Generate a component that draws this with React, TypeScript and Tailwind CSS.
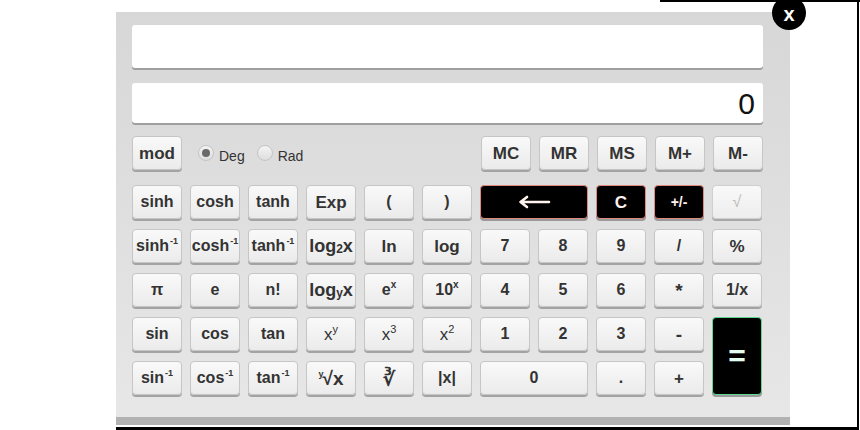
import React from "react";
import clsx from "clsx";

type KeyProps = {
  children?: React.ReactNode;
  className?: string;
  size?: string;
};

const light =
  "border-[#c6c6c6] bg-gradient-to-b from-[#f9f9f9] to-[#ebebeb] text-[#333] shadow-[0_2px_0_#a3a3a3]";

function Key({ children, className, size = "text-[16px]" }: KeyProps) {
  return (
    <button
      className={clsx(
        "flex h-[34px] items-center justify-center rounded-[4px] border font-bold leading-none",
        size,
        className ?? light
      )}
    >
      {children}
    </button>
  );
}

const dark =
  "border-[#e2897c] bg-black text-[#fff1ee] shadow-[0_2px_0_#9a9a9a]";

function Inv({ t }: { t: string }) {
  return (
    <span className="flex items-start">
      {t}
      <span className="ml-[1px] mt-[-1px] text-[9px]">-1</span>
    </span>
  );
}

function Radio({ on, label }: { on?: boolean; label: string }) {
  return (
    <label className="flex items-center gap-[5px] text-[14px] text-[#333]">
      <span className="flex h-[16px] w-[16px] items-center justify-center rounded-full border border-[#c4c4c4] bg-gradient-to-b from-[#f4f4f4] to-[#dedede]">
        {on && <span className="h-[8px] w-[8px] rounded-full bg-[#6a6a6a]" />}
      </span>
      <span className="mt-[6px]">{label}</span>
    </label>
  );
}

export default function App() {
  return (
    <div
      className="relative h-[430px] w-[860px] overflow-hidden bg-white"
      style={{ fontFamily: '"Liberation Sans", Arial, sans-serif' }}
    >
      {/* window frame */}
      <div className="absolute left-[660px] top-0 h-[2px] w-[200px] bg-black" />
      <div className="ml-[116px] h-[430px] w-[743px] border-b-[3px] border-r-2 border-black pt-[12px]">
        <div className="h-[413px] w-[674px] border-b-[8px] border-[#b2b2b2] bg-gradient-to-b from-[#d7d7d7] to-[#e7e7e7] pl-4 pt-[13px]">
          <div className="h-[43px] w-[631px] rounded-[3px] bg-white shadow-[0_2px_0_#9f9f9f]" />
          <div className="mt-[15px] flex h-[40px] w-[631px] items-center justify-end rounded-[3px] bg-white pr-2 text-[30px] text-[#111] shadow-[0_2px_0_#9f9f9f]">
            0
          </div>

          <div className="mt-[13px] flex w-[631px] items-center">
            <Key className={clsx("w-[50px]", light)} size="text-[17px]">
              mod
            </Key>
            <div className="ml-[16px] flex items-center gap-[12px]">
              <Radio on label="Deg" />
              <Radio label="Rad" />
            </div>
            <div className="ml-auto grid grid-cols-[repeat(5,50px)] gap-x-2">
              {["MC", "MR", "MS", "M+", "M-"].map((m) => (
                <Key key={m} size="text-[17px]">
                  {m}
                </Key>
              ))}
            </div>
          </div>

          <div className="mt-[15px] grid w-[631px] grid-cols-[repeat(11,50px)] grid-rows-[repeat(5,34px)] gap-x-2 gap-y-[10px]">
            <Key>sinh</Key>
            <Key>cosh</Key>
            <Key>tanh</Key>
            <Key size="text-[17px]">Exp</Key>
            <Key>(</Key>
            <Key>)</Key>
            <Key className={clsx("col-span-2", dark)}>
              <svg width="34" height="14" viewBox="0 0 34 14">
                <path
                  d="M32 7H4M10 2L3.5 7l6.5 5"
                  fill="none"
                  stroke="#fff3f0"
                  strokeWidth="2.6"
                  strokeLinecap="round"
                  strokeLinejoin="round"
                />
              </svg>
            </Key>
            <Key className={dark} size="text-[17px]">
              C
            </Key>
            <Key className={dark} size="text-[14px]">
              +/-
            </Key>
            <Key className="border-[#cfcfcf] bg-gradient-to-b from-[#f9f9f9] to-[#ededed] font-normal text-[#b8b8b8] shadow-[0_2px_0_#a8a8a8]">
              √
            </Key>

            <Key>
              <Inv t="sinh" />
            </Key>
            <Key>
              <Inv t="cosh" />
            </Key>
            <Key>
              <Inv t="tanh" />
            </Key>
            <Key size="text-[18px]">
              log<sub className="text-[12px]">2</sub>x
            </Key>
            <Key size="text-[17px]">ln</Key>
            <Key size="text-[17px]">log</Key>
            <Key>7</Key>
            <Key>8</Key>
            <Key>9</Key>
            <Key>/</Key>
            <Key size="text-[17px]">%</Key>

            <Key>π</Key>
            <Key>e</Key>
            <Key>n!</Key>
            <Key size="text-[18px]">
              log<sub className="text-[12px]">y</sub>x
            </Key>
            <Key>
              e<sup className="text-[10px]">x</sup>
            </Key>
            <Key>
              10<sup className="text-[10px]">x</sup>
            </Key>
            <Key>4</Key>
            <Key>5</Key>
            <Key>6</Key>
            <Key size="text-[19px]">*</Key>
            <Key>1/x</Key>

            <Key>sin</Key>
            <Key>cos</Key>
            <Key>tan</Key>
            <Key className={clsx(light, "font-normal")} size="text-[17px]">
              x<sup className="text-[11px]">y</sup>
            </Key>
            <Key className={clsx(light, "font-normal")} size="text-[17px]">
              x<sup className="text-[11px]">3</sup>
            </Key>
            <Key className={clsx(light, "font-normal")} size="text-[17px]">
              x<sup className="text-[11px]">2</sup>
            </Key>
            <Key>1</Key>
            <Key>2</Key>
            <Key>3</Key>
            <Key size="text-[19px]">-</Key>
            <Key
              className="row-span-2 h-auto border-[#5fd98f] bg-black text-[#e3fff0] shadow-[0_2px_0_#9a9a9a]"
              size="text-[30px]"
            >
              =
            </Key>

            <Key>
              <Inv t="sin" />
            </Key>
            <Key>
              <Inv t="cos" />
            </Key>
            <Key>
              <Inv t="tan" />
            </Key>
            <Key size="text-[19px]">
              <sup className="mr-[-1px] text-[9px]">y</sup>√x
            </Key>
            <Key size="text-[19px]">∛</Key>
            <Key>|x|</Key>
            <Key className={clsx("col-span-2", light)}>0</Key>
            <Key>.</Key>
            <Key size="text-[17px]">+</Key>
          </div>
        </div>
      </div>

      <button className="absolute left-[772px] top-[-4px] flex h-[34px] w-[34px] items-center justify-center rounded-full bg-black pt-[2px] text-[20px] font-bold text-white">
        x
      </button>
    </div>
  );
}
